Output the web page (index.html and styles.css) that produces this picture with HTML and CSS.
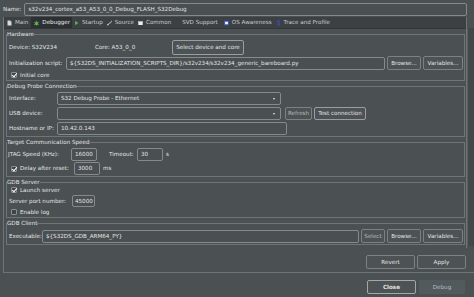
FILE: index.html
```html
<!DOCTYPE html>
<html lang="en">
<head>
    <meta charset="UTF-8">
    <title>Debug Configurations</title>
    <link rel="stylesheet" href="styles.css">
</head>
<body>

    <!-- Name -->
    <div class="name-row">
        <span>Name:</span>
        <div class="field">s32v234_cortex_a53_A53_0_0_Debug_FLASH_S32Debug</div>
    </div>

    <div class="dialog">
        <div class="folder-row">
            <div class="folder">

                <!-- Tabs -->
                <div class="tabs">
                    <div class="tab">
                        <svg class="icon" viewBox="0 0 5 6"><path d="M0.5 0.5h2.8l1.2 1.2v3.8h-4z" fill="#d8dadb"/><path d="M3.3 0.5v1.2h1.2" fill="none" stroke="#8a8e90" stroke-width="0.5"/></svg>
                        Main
                    </div>
                    <div class="tab active">
                        <svg class="icon" viewBox="0 0 5 6"><ellipse cx="2.5" cy="3.4" rx="1.5" ry="2" fill="#5fb44f"/><circle cx="2.5" cy="1.2" r="0.8" fill="#3f8a35"/><path d="M0 2.5h1M4 2.5h1M0 4.5h1M4 4.5h1" stroke="#5fb44f" stroke-width="0.6"/></svg>
                        Debugger
                    </div>
                    <div class="tab">
                        <svg class="icon" viewBox="0 0 5 6"><path d="M1 0.8l3.5 2.2l-3.5 2.2z" fill="#4fae55"/></svg>
                        Startup
                    </div>
                    <div class="tab">
                        <svg class="icon" viewBox="0 0 5 6"><path d="M0.5 5.2l1.6-2h1.2l1.4-2.5" fill="none" stroke="#d0d3d4" stroke-width="0.8"/><circle cx="0.9" cy="4.8" r="0.7" fill="#d0d3d4"/></svg>
                        Source
                    </div>
                    <div class="tab">
                        <svg class="icon" viewBox="0 0 5 6"><rect x="0.3" y="1" width="4.4" height="4" fill="#eceeef"/><rect x="0.3" y="1" width="4.4" height="1" fill="#a9adb0"/></svg>
                        Common
                    </div>
                    <div class="tab svd">
                        SVD Support
                    </div>
                    <div class="tab">
                        <svg class="icon" viewBox="0 0 5 6"><rect x="0.2" y="0.8" width="4.6" height="4.4" fill="#3f5fd0"/><rect x="1" y="1.8" width="3" height="2.4" fill="#e8ecf5"/></svg>
                        OS Awareness
                    </div>
                    <div class="tab">
                        <svg class="icon" viewBox="0 0 5 6"><path d="M4 1.2c-1-0.8-3-0.5-2.8 0.8c0.2 1 2.6 0.8 2.6 2c0 1.2-2 1.3-3 0.6" fill="none" stroke="#3553e0" stroke-width="1"/></svg>
                        Trace and Profile
                    </div>
                </div>

                <!-- Debugger tab -->
                <div class="tab-body">

                    <fieldset class="group">
                        <legend>Hardware</legend>
                        <div class="rows">
                            <div class="row row-tall">
                                <span class="device">Device: S32V234</span>
                                <span class="core">Core: A53_0_0</span>
                                <button class="btn strong select-core">Select device and core</button>
                            </div>
                            <div class="row row-mid">
                                <span class="label-init">Initialization script:</span>
                                <div class="field grow">${S32DS_INITIALIZATION_SCRIPTS_DIR}/s32v234/s32v234_generic_bareboard.py</div>
                                <button class="btn browse">Browse...</button>
                                <button class="btn variables">Variables...</button>
                            </div>
                            <div class="row row-check">
                                <span class="check checked"></span>
                                <span>Initial core</span>
                            </div>
                        </div>
                    </fieldset>

                    <fieldset class="group">
                        <legend>Debug Probe Connection</legend>
                        <div class="rows probe-rows">
                            <div class="row">
                                <span class="label-probe">Interface:</span>
                                <div class="field select">S32 Debug Probe - Ethernet<span class="arrow"></span></div>
                            </div>
                            <div class="row">
                                <span class="label-probe">USB device:</span>
                                <div class="field select"><span class="arrow"></span></div>
                                <button class="btn dim refresh">Refresh</button>
                                <button class="btn strong test">Test connection</button>
                            </div>
                            <div class="row">
                                <span class="label-probe">Hostname or IP:</span>
                                <div class="field host">10.42.0.143</div>
                            </div>
                        </div>
                    </fieldset>

                    <fieldset class="group">
                        <legend>Target Communication Speed</legend>
                        <div class="rows">
                            <div class="row">
                                <span class="label-speed">JTAG Speed (KHz):</span>
                                <div class="field small">16000</div>
                                <span class="label-timeout">Timeout:</span>
                                <div class="field small">30</div>
                                <span class="unit">s</span>
                            </div>
                            <div class="row">
                                <span class="check checked"></span>
                                <span class="label-delay">Delay after reset:</span>
                                <div class="field small">3000</div>
                                <span class="unit">ms</span>
                            </div>
                        </div>
                    </fieldset>

                    <fieldset class="group">
                        <legend>GDB Server</legend>
                        <div class="rows server-rows">
                            <div class="row row-check">
                                <span class="check checked"></span>
                                <span>Launch server</span>
                            </div>
                            <div class="row row-port">
                                <span class="label-port">Server port number:</span>
                                <div class="field port">45000</div>
                            </div>
                            <div class="row row-check">
                                <span class="check"></span>
                                <span>Enable log</span>
                            </div>
                        </div>
                    </fieldset>

                    <fieldset class="group">
                        <legend>GDB Client</legend>
                        <div class="rows">
                            <div class="row row-mid">
                                <span class="label-exec">Executable:</span>
                                <div class="field grow">${S32DS_GDB_ARM64_PY}</div>
                                <button class="btn dim select">Select</button>
                                <button class="btn browse">Browse...</button>
                                <button class="btn variables">Variables...</button>
                            </div>
                        </div>
                    </fieldset>

                </div>
            </div>
            <div class="strip"></div>
        </div>

        <div class="apply-row">
            <button class="btn wide">Revert</button>
            <button class="btn wide">Apply</button>
        </div>
    </div>

    <!-- Bottom buttons -->
    <div class="footer">
        <button class="btn wide default">Close</button>
        <button class="btn debug">Debug</button>
    </div>

</body>
</html>
```

FILE: styles.css
```css
* {
    box-sizing: border-box;
}

body {
    margin: 0;
    width: 474px;
    height: 297px;
    overflow: hidden;
    background-color: #4b5053;
    color: #e2e4e5;
    font-family: "DejaVu Sans", sans-serif;
    font-size: 5.6px;
    line-height: 7px;
    white-space: nowrap;
}

/* Name row */
.name-row {
    display: flex;
    align-items: center;
    gap: 3px;
    height: 17px;
    padding: 3px 7px 1px 3px;
}

.name-row .field {
    flex: 1;
}

/* Text fields */
.field {
    display: flex;
    align-items: center;
    flex-shrink: 0;
    height: 13px;
    padding: 0 3px;
    border: 1px solid #858a8d;
    border-radius: 2px;
    background-color: #4a4f52;
    overflow: hidden;
}

.field.grow {
    flex: 1;
    flex-shrink: 1;
    min-width: 0;
}

.field.select {
    width: 224px;
    padding-right: 5px;
}

.field.select .arrow {
    margin-left: auto;
    width: 0;
    height: 0;
    border-left: 1.5px solid transparent;
    border-right: 1.5px solid transparent;
    border-top: 2px solid #e8e8e8;
}

.field.host {
    width: 230px;
}

.field.small {
    width: 26px;
}

.field.port {
    width: 23px;
    padding: 0 2px;
}

/* Buttons */
.btn {
    flex-shrink: 0;
    height: 14px;
    padding: 0 1px;
    border: 1px solid #7c8184;
    border-radius: 2px;
    background-color: #4d5255;
    color: #e2e4e5;
    font-family: "DejaVu Sans", sans-serif;
    font-size: 5.6px;
    line-height: 7px;
    white-space: nowrap;
}

.btn.strong {
    border-color: #999ea1;
}

.btn.dim {
    color: #b7bbbd;
}

.btn.browse {
    width: 34px;
}

.btn.variables {
    width: 40px;
}

.btn.select {
    width: 24px;
}

.btn.wide {
    width: 49px;
}

.btn.default {
    border-color: #a3a7aa;
    font-weight: bold;
}

.btn.debug {
    width: 46px;
    border-color: transparent;
    background-color: #535a5e;
    color: #b9bdc0;
}

/* Dialog frame */
.dialog {
    display: flex;
    flex-direction: column;
    height: 256px;
    margin-left: 3px;
    border-left: 1px solid #6f7477;
    border-bottom: 1px solid #6f7477;
}

.folder-row {
    display: flex;
    flex: 1;
}

.folder {
    width: 463px;
    border-right: 1px solid #6f7477;
}

.strip {
    flex: 1;
    margin-top: 11px;
    margin-bottom: 2px;
    background-color: #42474a;
    border-left: 1px solid #595e61;
}

/* Tabs */
.tabs {
    display: flex;
    height: 12px;
    background-color: #3c4043;
    border-bottom: 1px solid #33373a;
}

.tab {
    display: flex;
    align-items: center;
    gap: 3px;
    padding: 0 2px 0 2px;
    color: #c9cccd;
}

.tab:first-child {
    padding-left: 3px;
    padding-right: 3px;
}

.tab.active {
    padding: 0 2px 0 3px;
    background-color: #2c3033;
    color: #eceeef;
}

.tab.svd {
    padding: 0 4px 0 9px;
}

.icon {
    display: block;
    flex-shrink: 0;
    width: 5px;
    height: 6px;
}

.tab-body {
    padding: 2px 1px 0 2px;
}

/* Group boxes */
.group {
    margin: 0 0 2px;
    padding: 2px 1px 1px 2px;
    border: 1px solid #6f7477;
    min-width: 0;
}

.group legend {
    margin-left: -2px;
    padding: 0;
    line-height: 7px;
}

.rows {
    display: flex;
    flex-direction: column;
    gap: 1px;
}

.probe-rows {
    gap: 2px;
}

.server-rows {
    margin-top: -2px;
}

.row {
    display: flex;
    align-items: center;
    gap: 2px;
    height: 13px;
}

.row > span {
    flex-shrink: 0;
}

.row-tall {
    height: 15px;
}

.row-mid {
    height: 14px;
}

.row-check {
    height: 8px;
}

.row-port {
    height: 12px;
}

.row-port .field {
    height: 12px;
}

.device {
    width: 84px;
}

.core {
    width: 75px;
}

.select-core {
    width: 72px;
    height: 15px;
}

.label-init {
    width: 55px;
}

.label-probe {
    width: 46px;
}

.refresh {
    width: 27px;
    margin-left: 2px;
    height: 13px;
}

.test {
    width: 52px;
    height: 13px;
}

.label-speed {
    width: 61px;
    margin-left: -1px;
}

.label-timeout {
    width: 26px;
    margin-left: 10px;
}

.unit {
    margin-left: 1px;
}

.label-delay {
    width: 52px;
}

.label-port {
    width: 61px;
}

.label-exec {
    width: 31px;
}

/* Checkboxes */
.check {
    width: 6px;
    height: 6px;
    margin: 0 1px 0 2px;
    border: 1px solid #8a8f92;
    border-radius: 1px;
    background-color: #3f4447;
    position: relative;
}

.check.checked::after {
    content: "";
    position: absolute;
    left: 1px;
    top: -1px;
    width: 2px;
    height: 4px;
    border-right: 1px solid #ffffff;
    border-bottom: 1px solid #ffffff;
    transform: rotate(40deg);
}

/* Apply / Revert */
.apply-row {
    display: flex;
    justify-content: flex-end;
    gap: 2px;
    height: 24px;
    padding: 7px 8px 0 0;
}

/* Footer */
.footer {
    display: flex;
    justify-content: flex-end;
    gap: 3px;
    height: 24px;
    padding: 7px 9px 0 0;
}
```
